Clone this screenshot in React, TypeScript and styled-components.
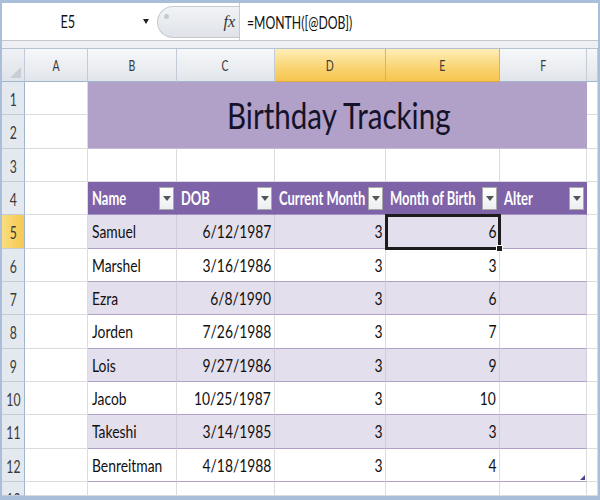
import React from "react";
import styled, { createGlobalStyle, css } from "styled-components";

const GlobalStyle = createGlobalStyle`
  html, body { margin: 0; padding: 0; background: #fff; }
  body { font-family: Lato, "Noto Sans", sans-serif; }
`;

const COLS = "23px 63px 89px 98px 111px 114px 87px 1fr";
const LETTERS = ["A", "B", "C", "D", "E", "F"];
const HEADERS = ["Name", "DOB", "Current Month", "Month of Birth", "Alter"];

const people: [string, string, number, number][] = [
  ["Samuel", "6/12/1987", 3, 6],
  ["Marshel", "3/16/1986", 3, 3],
  ["Ezra", "6/8/1990", 3, 6],
  ["Jorden", "7/26/1988", 3, 7],
  ["Lois", "9/27/1986", 3, 9],
  ["Jacob", "10/25/1987", 3, 10],
  ["Takeshi", "3/14/1985", 3, 3],
  ["Benreitman", "4/18/1988", 3, 4],
];

const Frame = styled.div`
  width: 600px;
  height: 500px;
  box-sizing: border-box;
  border: 2px solid #a9bed8;
  border-top-width: 3px;
  border-bottom-width: 4px;
  display: flex;
  flex-direction: column;
  overflow: hidden;
  background: #fff;
`;

const Squeeze = styled.span<{ $sx: number; $origin?: string }>`
  display: inline-block;
  white-space: nowrap;
  transform: scaleX(${(p) => p.$sx});
  transform-origin: ${(p) => p.$origin ?? "left"} center;
`;

/* formula bar */
const FormulaBar = styled.div`
  flex-shrink: 0;
  height: 38px;
  display: flex;
  align-items: center;
  background: #fff;
  border-bottom: 1px solid #c3c8cf;
  box-sizing: border-box;
`;

const NameBox = styled.div`
  width: 155px;
  height: 100%;
  display: flex;
  align-items: center;
  font-size: 17px;
  color: #111;
`;

const NameText = styled.div`
  width: 132px;
  text-align: center;
`;

const DropArrow = styled.div`
  margin-left: 9px;
  width: 0;
  height: 0;
  border-left: 3.5px solid transparent;
  border-right: 3.5px solid transparent;
  border-top: 5px solid #222;
`;

const FxGroup = styled.div`
  width: 82px;
  height: 32px;
  box-sizing: border-box;
  display: flex;
  align-items: center;
  justify-content: space-between;
  padding: 0 4px 0 6px;
  border: 1px solid #c5cad1;
  border-right: none;
  border-radius: 16px 0 0 16px;
  background: linear-gradient(#f1f3f6, #dfe3e8);
`;

const Dot = styled.div`
  width: 5px;
  height: 5px;
  border-radius: 50%;
  background: #c4cad2;
  margin-top: -10px;
`;

const Fx = styled.span`
  font-family: "Liberation Serif", serif;
  font-style: italic;
  font-size: 16px;
  color: #333;
`;

const FormulaInput = styled.div`
  flex: 1;
  height: 100%;
  border-left: 1px solid #c5cad1;
  padding-left: 7px;
  display: flex;
  align-items: center;
  font-size: 18px;
  color: #111;
`;

const Divider = styled.div`
  flex-shrink: 0;
  height: 8px;
  background: #eef0f3;
  border-bottom: 1px solid #b6c1ce;
  box-sizing: border-box;
`;

/* sheet */
const Sheet = styled.div`
  flex: 1;
  min-height: 0;
  overflow: hidden;
  display: grid;
  grid-template-columns: ${COLS};
  grid-template-rows: 33px repeat(12, 33.33px) minmax(0, 1fr);
`;

const headBase = css`
  box-sizing: border-box;
  display: flex;
  align-items: center;
  justify-content: center;
  overflow: hidden;
  color: #3a3a3a;
  border-right: 1px solid #c3cbd6;
  border-bottom: 1px solid #9eb6ce;
`;

const Corner = styled.div`
  ${headBase};
  position: relative;
  background: linear-gradient(#eef1f5, #dfe4ea);
  &::after {
    content: "";
    position: absolute;
    right: 3px;
    bottom: 3px;
    border-left: 11px solid transparent;
    border-bottom: 11px solid #c9ced5;
  }
`;

const ColHeader = styled.div<{ $active?: boolean }>`
  ${headBase};
  font-size: 15px;
  background: ${(p) =>
    p.$active
      ? "linear-gradient(#fdeeb9, #f9d370 60%, #f6c550)"
      : "linear-gradient(#f7f8fa, #e1e5ea)"};
  border-right-color: ${(p) => (p.$active ? "#e0b24c" : "#c3cbd6")};
  border-bottom-color: ${(p) => (p.$active ? "#e0a93a" : "#9eb6ce")};
`;

const RowHeader = styled.div<{ $active?: boolean }>`
  ${headBase};
  font-size: 18px;
  align-items: flex-start;
  padding-top: 6px;
  border-right-color: #9eb6ce;
  border-bottom-color: #c3cbd6;
  background: ${(p) =>
    p.$active ? "linear-gradient(90deg, #f9dc80, #f6c94f)" : "#e4e9f0"};
`;

type Kind = "plain" | "head" | "band" | "row";

const Cell = styled.div<{ $kind?: Kind; $align?: "left" | "right" }>`
  position: relative;
  box-sizing: border-box;
  display: flex;
  align-items: center;
  justify-content: ${(p) => (p.$align === "right" ? "flex-end" : "flex-start")};
  padding: 0 3px 0 4px;
  font-size: 18px;
  color: #111;
  border-right: 1px solid #dcdcdc;
  border-bottom: 1px solid #dcdcdc;
  background: #fff;
  ${(p) =>
    p.$kind === "head" &&
    css`
      background: #7f63a8;
      color: #fff;
      font-weight: 700;
      border-right-color: #7f63a8;
      border-bottom-color: #a592c4;
    `}
  ${(p) =>
    p.$kind === "band" &&
    css`
      background: #e4dfec;
      border-right-color: #d2ccdc;
      border-bottom-color: #b1a0c7;
    `}
  ${(p) =>
    p.$kind === "row" &&
    css`
      border-right-color: #dcdcdc;
      border-bottom-color: #b1a0c7;
    `}
`;

const Title = styled.div`
  grid-column: 3 / 8;
  grid-row: 2 / 4;
  background: #b1a0c8;
  display: flex;
  align-items: center;
  justify-content: center;
  font-size: 37px;
  color: #15132a;
  border-bottom: 1px solid #c7bcd8;
  padding-left: 2px;
`;

const FilterBtn = styled.div`
  position: absolute;
  right: 2px;
  top: 5px;
  width: 15px;
  height: 23px;
  box-sizing: border-box;
  background: linear-gradient(#ffffff, #eceef1);
  border: 1px solid #a9a9a9;
  &::after {
    content: "";
    position: absolute;
    left: 3px;
    top: 8px;
    border-left: 4px solid transparent;
    border-right: 4px solid transparent;
    border-top: 5px solid #555;
  }
`;

const Selection = styled.div`
  position: absolute;
  left: -1px;
  top: -1px;
  right: -2px;
  bottom: -2px;
  border: 3px solid #1c1c1c;
  z-index: 2;
  pointer-events: none;
  &::after {
    content: "";
    position: absolute;
    right: -5px;
    bottom: -5px;
    width: 5px;
    height: 5px;
    background: #1c1c1c;
    border: 1px solid #fff;
  }
`;

const ResizeMark = styled.div`
  position: absolute;
  right: 1px;
  bottom: 1px;
  border-left: 5px solid transparent;
  border-bottom: 5px solid #4f3f86;
`;

const BODY_SX = 0.77;

export default function App() {
  const rows: React.ReactNode[] = [];

  // column header row
  rows.push(<Corner key="corner" />);
  LETTERS.forEach((l) =>
    rows.push(
      <ColHeader key={"c" + l} $active={l === "D" || l === "E"}>
        <Squeeze $sx={0.7} $origin="center">
          {l}
        </Squeeze>
      </ColHeader>
    )
  );
  rows.push(<ColHeader key="cG" />);

  const rowNum = (n: number) => (
    <RowHeader key={"r" + n} $active={n === 5}>
      <Squeeze $sx={0.68} $origin="center">
        {n}
      </Squeeze>
    </RowHeader>
  );

  // rows 1-2 (title merged across B:F)
  [1, 2].forEach((n) => {
    rows.push(rowNum(n));
    rows.push(<Cell key={"a" + n} />);
    rows.push(<Cell key={"g" + n} />);
  });

  // row 3 and row 13: empty
  const emptyRow = (n: number) => {
    rows.push(rowNum(n));
    LETTERS.forEach((l) => rows.push(<Cell key={l + n} />));
    rows.push(<Cell key={"g" + n} />);
  };
  emptyRow(3);

  // row 4: table header
  rows.push(rowNum(4));
  rows.push(<Cell key="a4" />);
  HEADERS.forEach((h) =>
    rows.push(
      <Cell key={"h" + h} $kind="head">
        <Squeeze $sx={0.72}>{h}</Squeeze>
        <FilterBtn />
      </Cell>
    )
  );
  rows.push(<Cell key="g4" />);

  // data rows
  people.forEach(([name, dob, cur, birth], i) => {
    const n = i + 5;
    const kind: Kind = i % 2 === 0 ? "band" : "row";
    const last = i === people.length - 1;
    rows.push(rowNum(n));
    rows.push(<Cell key={"a" + n} />);
    rows.push(
      <Cell key={"b" + n} $kind={kind}>
        <Squeeze $sx={BODY_SX}>{name}</Squeeze>
      </Cell>
    );
    rows.push(
      <Cell key={"c" + n} $kind={kind} $align="right">
        <Squeeze $sx={BODY_SX} $origin="right">
          {dob}
        </Squeeze>
      </Cell>
    );
    rows.push(
      <Cell key={"d" + n} $kind={kind} $align="right">
        <Squeeze $sx={BODY_SX} $origin="right">
          {cur}
        </Squeeze>
      </Cell>
    );
    rows.push(
      <Cell key={"e" + n} $kind={kind} $align="right">
        <Squeeze $sx={BODY_SX} $origin="right">
          {birth}
        </Squeeze>
        {n === 5 && <Selection />}
      </Cell>
    );
    rows.push(
      <Cell key={"f" + n} $kind={kind}>
        {last && <ResizeMark />}
      </Cell>
    );
    rows.push(<Cell key={"g" + n} />);
  });

  emptyRow(13);

  return (
    <>
      <GlobalStyle />
      <Frame>
        <FormulaBar>
          <NameBox>
            <NameText>
              <Squeeze $sx={0.75} $origin="center">
                E5
              </Squeeze>
            </NameText>
            <DropArrow />
          </NameBox>
          <FxGroup>
            <Dot />
            <Fx>fx</Fx>
          </FxGroup>
          <FormulaInput>
            <Squeeze $sx={0.68}>=MONTH([@DOB])</Squeeze>
          </FormulaInput>
        </FormulaBar>
        <Divider />
        <Sheet>
          <Title>
            <Squeeze $sx={0.8} $origin="center">
              Birthday Tracking
            </Squeeze>
          </Title>
          {rows}
        </Sheet>
      </Frame>
    </>
  );
}
